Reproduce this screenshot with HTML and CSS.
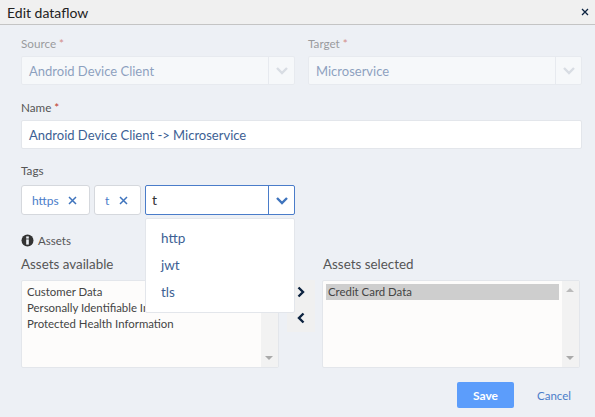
FILE: index.html
```html
<!DOCTYPE html>
<html lang="en">
<head>
    <meta charset="UTF-8">
    <title>Edit dataflow</title>
    <link rel="stylesheet" href="styles.css">
</head>
<body>
    <div class="dialog">
        <div class="dialog-header">
            <span class="dialog-title">Edit dataflow</span>
            <svg class="close-icon" width="8" height="8" viewBox="0 0 8 8"><path d="M1 1l6 6M7 1L1 7"/></svg>
        </div>
        <div class="dialog-body">
            <div class="row-two disabled">
                <div class="field">
                    <label>Source <span class="req">*</span></label>
                    <div class="select">
                        <span class="select-value">Android Device Client</span>
                        <span class="select-arrow"><svg width="14" height="9" viewBox="0 0 14 9"><path d="M2 2l5 5 5-5"/></svg></span>
                    </div>
                </div>
                <div class="field">
                    <label>Target <span class="req">*</span></label>
                    <div class="select">
                        <span class="select-value">Microservice</span>
                        <span class="select-arrow"><svg width="14" height="9" viewBox="0 0 14 9"><path d="M2 2l5 5 5-5"/></svg></span>
                    </div>
                </div>
            </div>

            <div class="field name-field">
                <label>Name <span class="req">*</span></label>
                <div class="text-input">Android Device Client -&gt; Microservice</div>
            </div>

            <div class="field tags-field">
                <label>Tags</label>
                <div class="tags">
                    <span class="tag tag-https">https <svg width="9" height="9" viewBox="0 0 9 9"><path d="M1 1l7 7M8 1L1 8"/></svg></span>
                    <span class="tag tag-t">t <svg width="9" height="9" viewBox="0 0 9 9"><path d="M1 1l7 7M8 1L1 8"/></svg></span>
                    <div class="tag-select">
                        <div class="tag-input">
                            <span class="tag-typed">t</span>
                            <span class="tag-arrow"><svg width="14" height="9" viewBox="0 0 14 9"><path d="M2 2l5 5 5-5"/></svg></span>
                        </div>
                        <ul class="menu">
                            <li>http</li>
                            <li>jwt</li>
                            <li>tls</li>
                        </ul>
                    </div>
                </div>
            </div>

            <div class="assets-head">
                <svg width="13" height="13" viewBox="0 0 13 13"><circle cx="6.5" cy="6.5" r="6"/><rect x="5.2" y="2.4" width="2.6" height="2.2" fill="#edf0f5"/><rect x="5.2" y="5.4" width="2.6" height="5.2" fill="#edf0f5"/></svg>
                <span>Assets</span>
            </div>

            <div class="transfer">
                <div class="transfer-col col-left">
                    <div class="list-title">Assets available</div>
                    <div class="listbox">
                        <ul class="list-items">
                            <li>Customer Data</li>
                            <li>Personally Identifiable Information</li>
                            <li>Protected Health Information</li>
                        </ul>
                        <div class="scroll"><i class="scroll-up"></i><i class="scroll-down"></i></div>
                    </div>
                </div>
                <div class="transfer-buttons">
                    <svg width="10" height="12" viewBox="0 0 10 12"><path d="M2.500 1.500L7 6l-4.500 4.500"/></svg>
                    <svg width="10" height="12" viewBox="0 0 10 12"><path d="M7.500 1.500L3 6l4.500 4.500"/></svg>
                </div>
                <div class="transfer-col col-right">
                    <div class="list-title">Assets selected</div>
                    <div class="listbox">
                        <ul class="list-items">
                            <li class="selected">Credit Card Data</li>
                        </ul>
                        <div class="scroll"><i class="scroll-up"></i><i class="scroll-down"></i></div>
                    </div>
                </div>
            </div>

            <div class="actions">
                <button class="btn-save">Save</button>
                <button class="btn-cancel">Cancel</button>
            </div>
        </div>
    </div>
</body>
</html>
```

FILE: styles.css
```css
* {
    box-sizing: border-box;
}

body {
    margin: 0;
    background: #edf0f5;
    font-family: 'Lato', 'Noto Sans', sans-serif;
    font-size: 13px;
    color: #4a4a4a;
}

svg path {
    fill: none;
    stroke: currentColor;
    stroke-width: 2.400;
}

.dialog {
    width: 595px;
    height: 417px;
    overflow: hidden;
}

.dialog-header {
    height: 25px;
    padding: 0 6px 0 7px;
    display: flex;
    align-items: center;
    justify-content: space-between;
    background: #f0f0f0;
    border-bottom: 1px solid #c4c4c4;
}

.dialog-title {
    font-size: 14px;
    color: #222;
}

.close-icon {
    color: #0c2340;
}

.close-icon path {
    stroke-width: 1.300;
}

.dialog-body {
    padding: 11px 13px 0 21px;
}

.row-two {
    display: grid;
    grid-template-columns: 274px 274px;
    gap: 13px;
    opacity: 0.55;
}

.field label {
    display: block;
    height: 20px;
    font-size: 11.700px;
    line-height: 15px;
    color: #555;
}

.req {
    color: #c0392b;
}

.select {
    height: 29px;
    display: flex;
    background: #fff;
    border: 1px solid #e3e6eb;
    border-radius: 2px;
}

.select-value {
    flex: 1;
    padding-left: 7px;
    line-height: 29px;
    color: #3d5f94;
}

.select-arrow {
    width: 26px;
    display: flex;
    align-items: center;
    justify-content: center;
    border-left: 1px solid #e3e6eb;
    color: #c8ced6;
}

.name-field {
    margin-top: 15px;
}

.text-input {
    height: 29px;
    padding-left: 7px;
    line-height: 29px;
    background: #fff;
    border: 1px solid #e3e6eb;
    border-radius: 2px;
    color: #3d5f94;
}

.tags-field {
    margin-top: 14px;
}

.tags-field label {
    height: 22px;
}

.tags {
    display: flex;
    gap: 4px;
    height: 30px;
}

.tag {
    display: flex;
    align-items: center;
    justify-content: space-between;
    padding: 0 12px 0 10px;
    background: #fff;
    border: 1px solid #d5d8dd;
    border-radius: 3px;
    font-size: 12px;
    color: #4a7cc9;
}

.tag-https {
    width: 69px;
}

.tag-t {
    width: 47px;
}

.tag svg {
    color: #3f74bd;
}

.tag svg path {
    stroke-width: 1.500;
}

.tag-select {
    position: relative;
    width: 150px;
}

.tag-input {
    height: 30px;
    display: flex;
    background: #fff;
    border: 1px solid #4a7cc9;
    border-radius: 2px;
}

.tag-typed {
    flex: 1;
    padding-left: 6px;
    line-height: 28px;
    font-size: 14px;
    color: #333;
}

.tag-arrow {
    width: 26px;
    display: flex;
    align-items: center;
    justify-content: center;
    border-left: 1px solid #4a7cc9;
    color: #3f74bd;
}

.menu {
    position: absolute;
    top: 33px;
    left: 0;
    width: 150px;
    height: 95px;
    margin: 0;
    padding: 6px 0 0 15px;
    list-style: none;
    background: #fff;
    border: 1px solid #e3e6eb;
    border-radius: 2px;
    z-index: 2;
    font-size: 13.500px;
    color: #3d5f94;
}

.menu li {
    height: 27px;
    line-height: 27px;
}

.assets-head {
    margin-top: 16px;
    display: flex;
    align-items: center;
    gap: 4px;
    height: 18px;
    font-size: 11.500px;
    color: #555;
}

.assets-head svg {
    fill: #333;
}

.transfer {
    display: flex;
    margin-top: 7px;
}

.transfer-col {
    flex: none;
}

.col-left,
.col-right {
    width: 258px;
}

.list-title {
    height: 24px;
    line-height: 16px;
    font-size: 13.400px;
    color: #555;
}

.col-right .list-title {
    padding-left: 1px;
}

.listbox {
    height: 88px;
    display: flex;
    background: #fdfcfb;
    border: 1px solid #e3e6eb;
    border-radius: 2px;
}

.list-items {
    flex: 1;
    margin: 0;
    padding: 3px;
    list-style: none;
    font-size: 11.400px;
    color: #444;
}

.list-items li {
    height: 16px;
    line-height: 16px;
    padding-left: 2px;
}

.list-items .selected {
    background: #cecece;
}

.scroll {
    position: relative;
    width: 17px;
    background: #f2f2f2;
}

.scroll i {
    position: absolute;
    left: 4px;
    width: 0;
    height: 0;
    border-left: 4px solid transparent;
    border-right: 4px solid transparent;
}

.scroll-up {
    top: 7px;
    border-bottom: 4px solid #bbb;
}

.scroll-down {
    bottom: 7px;
    border-top: 4px solid #aaa;
}

.transfer-buttons {
    width: 28px;
    height: 52px;
    margin: 24px 7px 0 8px;
    flex: none;
    display: flex;
    flex-direction: column;
    align-items: center;
    gap: 14px;
    padding-top: 6px;
    background: #f0f0f0;
    color: #0c2340;
}

.actions {
    margin-top: 14px;
    display: flex;
    justify-content: flex-end;
    align-items: center;
    gap: 23px;
    padding-right: 11px;
}

.btn-save {
    width: 57px;
    height: 26px;
    border: none;
    border-radius: 2px;
    background: #5c9dfb;
    color: #fff;
    font: bold 12px 'Lato', sans-serif;
}

.btn-cancel {
    padding: 0;
    border: none;
    background: none;
    color: #4a7cc9;
    font: 11.500px 'Lato', sans-serif;
}
```
